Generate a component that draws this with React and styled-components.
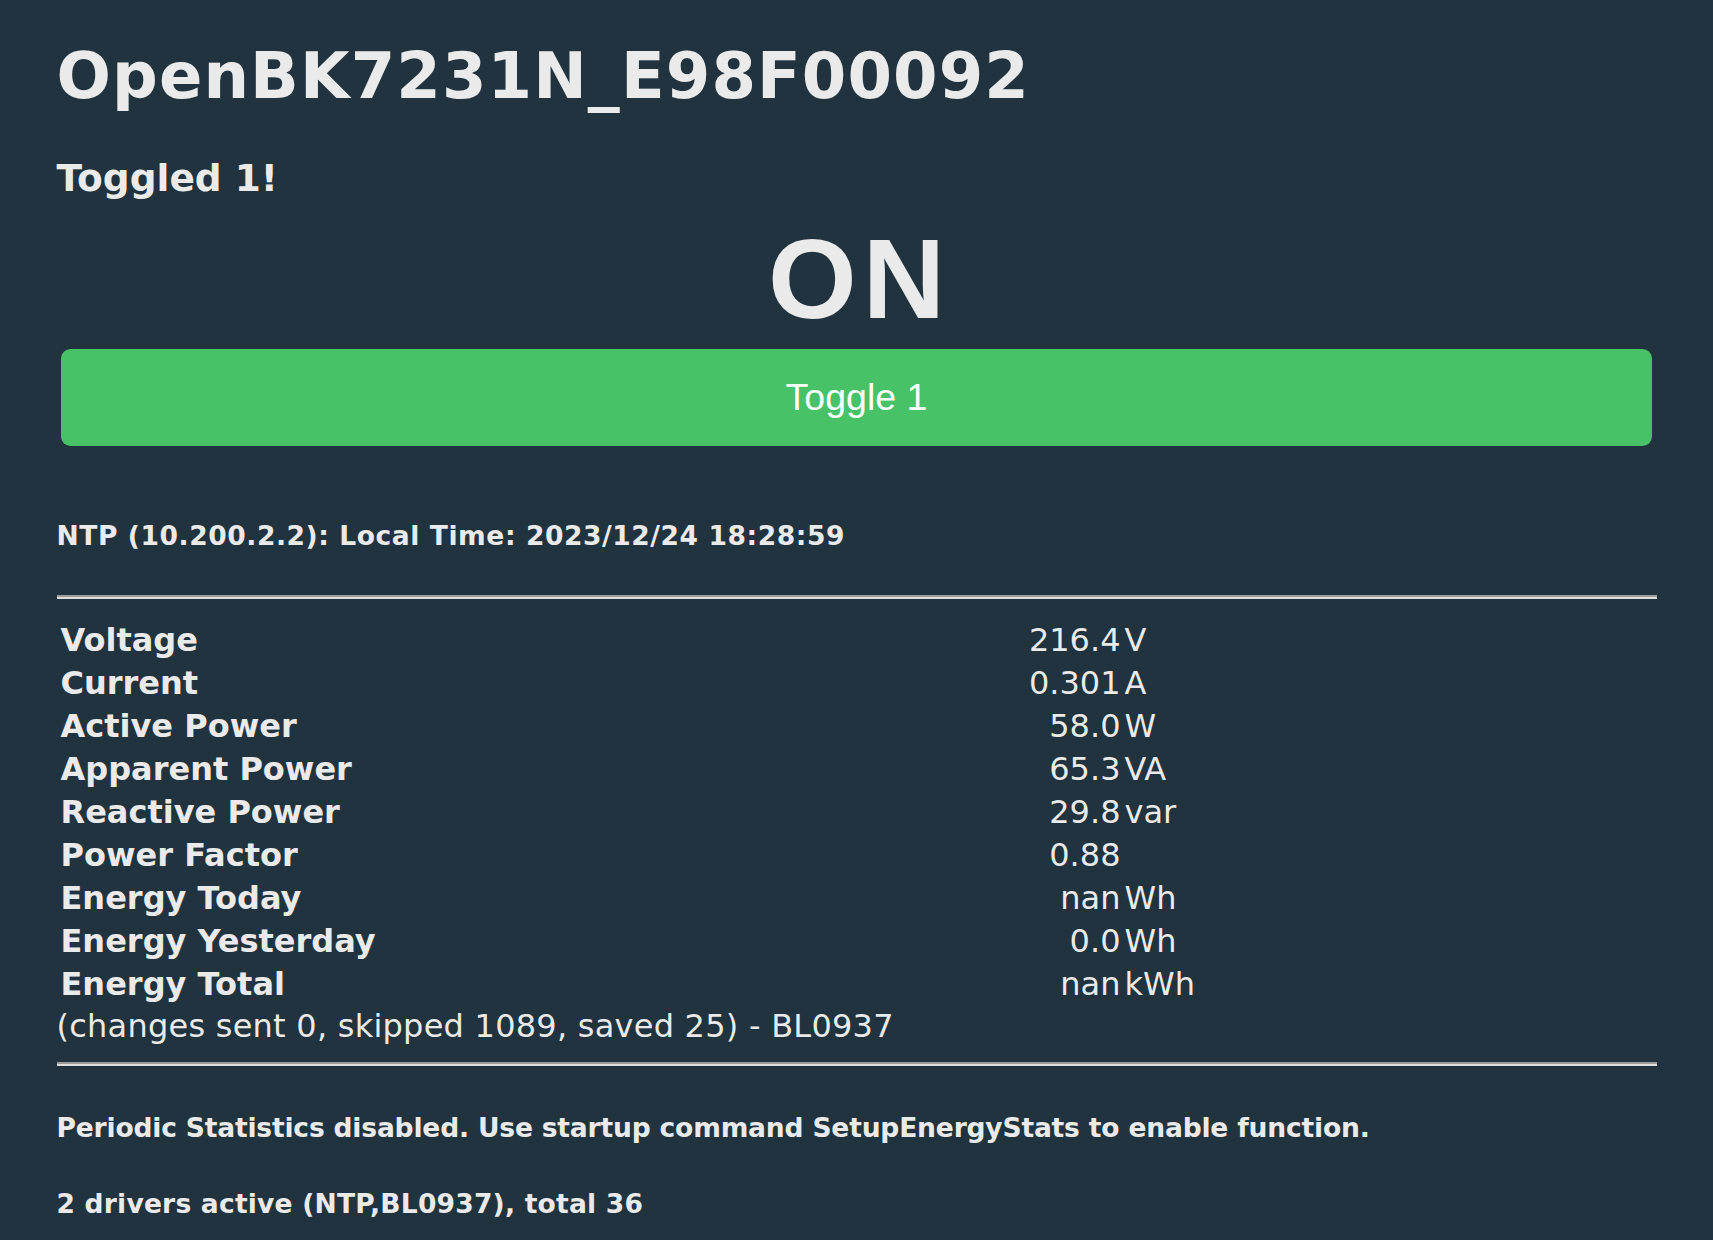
import React from "react";
import styled, { createGlobalStyle } from "styled-components";

const GlobalStyle = createGlobalStyle`
  html, body {
    margin: 0;
    padding: 0;
    background: #21333e;
  }
  body {
    min-height: 1240px;
    font-family: "DejaVu Sans", Verdana, sans-serif;
    color: #eaeaea;
  }
`;

const Page = styled.div`
  width: 1600px;
  margin: 0 auto;
  padding-top: 38px;
  text-align: left;
`;

const Title = styled.h1`
  margin: 0;
  font-size: 64px;
  line-height: 76px;
  font-weight: bold;
  letter-spacing: 1.1px;
`;

const Status = styled.h3`
  margin: 42px 0 0;
  font-size: 37.5px;
  line-height: 44px;
  font-weight: bold;
`;

const State = styled.div`
  margin-top: 14px;
  padding-left: 6px;
  text-align: center;
  font-family: "Liberation Sans", Arial, sans-serif;
  font-weight: bold;
  font-size: 114px;
  line-height: 130px;
  letter-spacing: 6px;
`;

const ToggleButton = styled.button`
  display: flex;
  align-items: center;
  justify-content: center;
  box-sizing: border-box;
  width: calc(100% - 9px);
  height: 97px;
  margin: 5px 4.5px 0;
  border: 0;
  border-radius: 9.6px;
  background: #47c266;
  color: #faffff;
  font-family: "Liberation Sans", Arial, sans-serif;
  font-size: 37.5px;
  cursor: pointer;
`;

const Info = styled.h5`
  margin: ${(p) => p.$top}px 0 0;
  font-size: 26.56px;
  line-height: 32px;
  font-weight: bold;
  letter-spacing: ${(p) => p.$ls || 0}px;
`;

const Rule = styled.hr`
  margin: ${(p) => p.$top}px 0 0;
  height: 0;
  border: 0;
  border-top: 2px solid #9c9c9c;
  border-bottom: 2px solid #dedede;
`;

const Table = styled.div`
  display: grid;
  grid-template-columns: 860px 196px 1fr;
  column-gap: 4px;
  padding-left: 4px;
  margin-top: 19.5px;
  font-size: 32px;
  line-height: 43px;
`;

const Label = styled.div`
  font-weight: bold;
  white-space: nowrap;
`;

const Value = styled.div`
  text-align: right;
  white-space: nowrap;
`;

const Unit = styled.div`
  white-space: nowrap;
`;

const Note = styled.div`
  font-size: 32px;
  line-height: 41px;
  letter-spacing: 0.24px;
`;

const rows = [
  ["Voltage", "216.4", "V"],
  ["Current", "0.301", "A"],
  ["Active Power", "58.0", "W"],
  ["Apparent Power", "65.3", "VA"],
  ["Reactive Power", "29.8", "var"],
  ["Power Factor", "0.88", ""],
  ["Energy Today", "nan", "Wh"],
  ["Energy Yesterday", "0.0", "Wh"],
  ["Energy Total", "nan", "kWh"],
];

export default function App() {
  return (
    <>
      <GlobalStyle />
      <Page>
        <Title>OpenBK7231N_E98F00092</Title>
        <Status>Toggled 1!</Status>
        <State>ON</State>
        <ToggleButton>Toggle 1</ToggleButton>
        <Info $top={74} $ls={0.56}>
          NTP (10.200.2.2): Local Time: 2023/12/24 18:28:59
        </Info>
        <Rule $top={43} />
        <Table>
          {rows.map(([l, v, u]) => (
            <React.Fragment key={l}>
              <Label>{l}</Label>
              <Value>{v}</Value>
              <Unit>{u}</Unit>
            </React.Fragment>
          ))}
        </Table>
        <Note>(changes sent 0, skipped 1089, saved 25) - BL0937</Note>
        <Rule $top={15} />
        <Info $top={46.5} $ls={-0.19}>
          Periodic Statistics disabled. Use startup command SetupEnergyStats to enable function.
        </Info>
        <Info $top={44} $ls={0.2}>
          2 drivers active (NTP,BL0937), total 36
        </Info>
      </Page>
    </>
  );
}
